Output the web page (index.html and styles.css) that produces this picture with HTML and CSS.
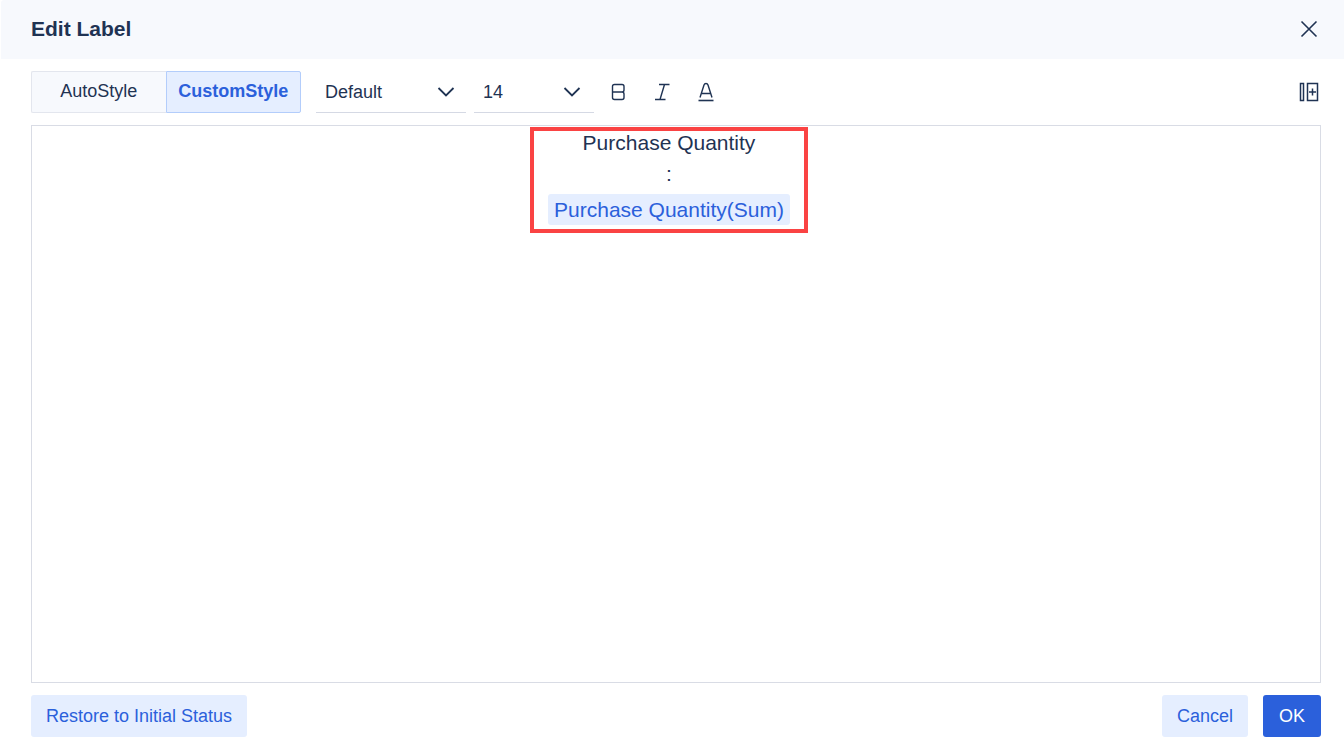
FILE: index.html
```html
<!DOCTYPE html>
<html lang="en">
<head>
<meta charset="UTF-8">
<meta name="viewport" content="width=device-width, initial-scale=1.0">
<title>Edit Label</title>
<link rel="stylesheet" href="styles.css">
</head>
<body>
<div class="dialog">
  <header class="dialog-header">
    <h1>Edit Label</h1>
    <button type="button" class="icon-btn" aria-label="Close">
      <svg width="20" height="20" viewBox="0 0 20 20"><path d="M2.5 2.5l15 15M17.5 2.5l-15 15" stroke-width="1.6"/></svg>
    </button>
  </header>

  <div class="toolbar">
    <div class="style-switch">
      <button type="button">AutoStyle</button>
      <button type="button" class="active">CustomStyle</button>
    </div>
    <div class="dropdown font-family">
      <select aria-label="Font family"><option>Default</option></select>
      <svg width="18" height="12" viewBox="0 0 18 12"><path d="M1.5 2l7.5 7.5L16.5 2" stroke-width="1.8"/></svg>
    </div>
    <div class="dropdown font-size">
      <select aria-label="Font size"><option>14</option></select>
      <svg width="18" height="12" viewBox="0 0 18 12"><path d="M1.5 2l7.5 7.5L16.5 2" stroke-width="1.8"/></svg>
    </div>
    <div class="formats">
      <button type="button" class="icon-btn" aria-label="Bold">
        <svg width="20" height="20" viewBox="0 0 20 20"><path d="M4.5 4.5q0-2 2-2h7.500q2 0 2 2v3.500q0 2-2 2q2 0 2 2v3.500q0 2-2 2h-7.500q-2 0-2-2zM4.500 10h9.500" stroke-width="1.4"/></svg>
      </button>
      <button type="button" class="icon-btn" aria-label="Italic">
        <svg width="20" height="20" viewBox="0 0 20 20"><path d="M7 2.5h10.500M3 17.5h10.500M12.500 2.500l-4.500 15" stroke-width="1.4"/></svg>
      </button>
      <button type="button" class="icon-btn" aria-label="Font color">
        <svg width="20" height="20" viewBox="0 0 20 20"><path d="M4 15.500L8 3q.5-1.500 2-1.500t2 1.500l4 12.500M5.500 11.500h9" stroke-width="1.4"/><path d="M2.500 18.500h15" stroke-width="1.6"/></svg>
      </button>
    </div>
    <button type="button" class="icon-btn insert-field" aria-label="Insert field">
      <svg width="20" height="20" viewBox="0 0 20 20"><path d="M1.500 1.500h3v17h-3zM8.500 1.500h10v17h-10zM10 10h7M13.500 6.500v7" stroke-width="1.5"/></svg>
    </button>
  </div>

  <main class="editor">
    <div class="label-content">
      <p>Purchase Quantity</p>
      <p>:</p>
      <span class="field">Purchase Quantity(Sum)</span>
    </div>
  </main>

  <footer class="dialog-footer">
    <button type="button" class="btn">Restore to Initial Status</button>
    <button type="button" class="btn cancel">Cancel</button>
    <button type="button" class="btn primary">OK</button>
  </footer>
</div>
</body>
</html>
```

FILE: styles.css
```css
* {
  box-sizing: border-box;
}
body {
  margin: 0;
  background: #fff;
  color: #1f3353;
  font-family: "Liberation Sans", Arial, sans-serif;
  font-size: 18px;
}
button,
select {
  font: inherit;
  color: inherit;
  cursor: pointer;
}
svg {
  display: block;
  fill: none;
  stroke: #1f3353;
}
.dialog {
  display: flex;
  flex-direction: column;
  min-height: 100vh;
  padding-bottom: 8px;
}
.dialog-header {
  display: flex;
  align-items: center;
  justify-content: space-between;
  height: 59px;
  margin-left: 1px;
  padding: 0 25px 2px 30px;
  background: #f7f9fd;
  border-top-left-radius: 3px;
}
h1 {
  margin: 0;
  font-size: 21px;
}
.icon-btn {
  padding: 0;
  border: none;
  background: none;
}

/* toolbar */
.toolbar {
  display: flex;
  align-items: center;
  height: 66px;
  padding: 0 25px 0 31px;
}
.style-switch {
  display: flex;
  width: 270px;
  height: 42px;
}
.style-switch button {
  flex: 1;
  padding: 0 0 2px;
  border: 1px solid #e3e6ee;
  border-right: none;
  border-radius: 2px 0 0 2px;
  background: #f7f9fd;
}
.style-switch .active {
  border: 1px solid #b3cdfb;
  border-radius: 0 2px 2px 0;
  background: #e5eeff;
  color: #2b60db;
  font-weight: bold;
}
.dropdown {
  position: relative;
  height: 42px;
  border-bottom: 1px solid #d5d9e4;
}
.dropdown select {
  appearance: none;
  width: 100%;
  height: 100%;
  padding: 0 32px 0 9px;
  border: none;
  background: none;
}
.dropdown svg {
  position: absolute;
  top: 15px;
  right: 11px;
  pointer-events: none;
}
.font-family {
  width: 150px;
  margin-left: 15px;
}
.font-size {
  width: 120px;
  margin-left: 8px;
}
.font-size svg {
  right: 13px;
}
.formats {
  display: flex;
  gap: 24px;
  margin-left: 14px;
}
.insert-field {
  margin-left: auto;
}

/* editing area */
.editor {
  flex: 1;
  display: flex;
  justify-content: center;
  align-items: flex-start;
  margin: 0 23px 0 31px;
  padding: 1px 14px 0 0;
  border: 1px solid #d9dce5;
}
.label-content {
  padding: 0 18px 8px;
  outline: 4px solid #fa4343;
  outline-offset: -4px;
  font-size: 21px;
  line-height: 31px;
  text-align: center;
}
.label-content p {
  margin: 0;
}
.field {
  display: block;
  margin-top: 5px;
  padding: 0 6px;
  border-radius: 3px;
  background: #e5eeff;
  color: #2b60db;
}

/* footer */
.dialog-footer {
  display: flex;
  gap: 15px;
  margin-top: 12px;
  padding: 0 23px 0 31px;
}
.btn {
  height: 42px;
  padding: 0 15px;
  border: none;
  border-radius: 3px;
  background: #e5eeff;
  color: #2b60db;
}
.cancel {
  margin-left: auto;
}
.primary {
  padding: 0 16px;
  background: #2b60db;
  color: #fff;
}
```
